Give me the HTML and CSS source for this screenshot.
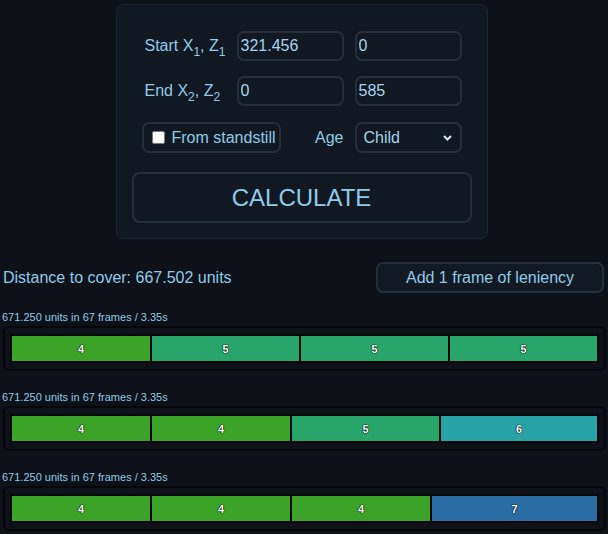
FILE: index.html
```html
<!DOCTYPE html>
<html>
<head>
<meta charset="utf-8">
<link rel="stylesheet" href="styles.css">
</head>
<body>
<div class="top">
  <div class="panel">
    <div class="row">
      <label class="lbl">Start X<sub>1</sub>, Z<sub>1</sub></label>
      <input class="field" type="text" value="321.456">
      <input class="field" type="text" value="0">
    </div>
    <div class="row">
      <label class="lbl">End X<sub>2</sub>, Z<sub>2</sub></label>
      <input class="field" type="text" value="0">
      <input class="field" type="text" value="585">
    </div>
    <div class="row row3">
      <label class="check"><input type="checkbox"><span>From standstill</span></label>
      <span class="age">Age</span>
      <select class="field select"><option>Child</option></select>
    </div>
    <button class="calc">CALCULATE</button>
  </div>
</div>

<div class="dist-row">
  <span class="dist">Distance to cover: 667.502 units</span>
  <button class="len">Add 1 frame of leniency</button>
</div>

<div class="result">
  <div class="rlabel">671.250 units in 67 frames / 3.35s</div>
  <div class="wrap"><div class="bar">
    <div class="seg c4" style="flex-grow:4">4</div>
    <div class="seg c5" style="flex-grow:5">5</div>
    <div class="seg c5" style="flex-grow:5">5</div>
    <div class="seg c5" style="flex-grow:5">5</div>
  </div></div>
</div>
<div class="result">
  <div class="rlabel">671.250 units in 67 frames / 3.35s</div>
  <div class="wrap"><div class="bar">
    <div class="seg c4" style="flex-grow:4">4</div>
    <div class="seg c4" style="flex-grow:4">4</div>
    <div class="seg c5" style="flex-grow:5">5</div>
    <div class="seg c6" style="flex-grow:6">6</div>
  </div></div>
</div>
<div class="result">
  <div class="rlabel">671.250 units in 67 frames / 3.35s</div>
  <div class="wrap"><div class="bar">
    <div class="seg c4" style="flex-grow:4">4</div>
    <div class="seg c4" style="flex-grow:4">4</div>
    <div class="seg c4" style="flex-grow:4">4</div>
    <div class="seg c7" style="flex-grow:7">7</div>
  </div></div>
</div>
</body>
</html>
```
FILE: styles.css
```css
html, body {
  margin: 0;
  background: #0e1118;
}
body {
  padding: 4px 2px 0 3px;
  font-family: "Liberation Sans", Arial, sans-serif;
  color: #8fcbea;
  font-size: 16px;
}
.top {
  padding-right: 6px;
}
.panel {
  width: 340px;
  margin: 0 auto;
  background: #121821;
  border: 1px solid #1d2430;
  border-radius: 7px;
  padding: 26px 15px 15px 15px;
  display: flex;
  flex-direction: column;
}
.row {
  display: flex;
  align-items: center;
  gap: 11px;
  padding: 0 10px;
  height: 30px;
  margin-bottom: 15px;
}
.row3 {
  height: 31px;
  margin-top: 1px;
  margin-bottom: 19px;
}
.lbl {
  flex: 1;
  padding-left: 3px;
  white-space: nowrap;
}
.lbl sub {
  font-size: 12px;
  vertical-align: -5px;
  line-height: 0;
}
.field {
  box-sizing: border-box;
  width: 107px;
  height: 30px;
  background: #121821;
  border: 2px solid #252e3b;
  border-radius: 7px;
  color: #a4d4ee;
  font-family: "Liberation Sans", Arial, sans-serif;
  font-size: 16px;
  padding: 0 0 0 2px;
  outline: none;
}
.select {
  height: 31px;
  appearance: none;
  -webkit-appearance: none;
  padding-left: 7px;
  color: #a4d4ee;
  background: #121821 url("data:image/svg+xml;utf8,<svg xmlns='http://www.w3.org/2000/svg' width='9' height='6' viewBox='0 0 9 6'><polyline points='1,1 4.5,4.5 8,1' fill='none' stroke='%23d4e9f4' stroke-width='2'/></svg>") no-repeat right 8px center;
}
.check {
  box-sizing: border-box;
  width: 139px;
  height: 31px;
  border: 2px solid #252e3b;
  border-radius: 7px;
  display: flex;
  align-items: center;
  white-space: nowrap;
}
.check input {
  width: 13px;
  height: 13px;
  margin: 0 7px 0 8px;
}
.age {
  margin-left: auto;
}
.calc {
  height: 51px;
  background: #121821;
  border: 2px solid #252e3b;
  border-radius: 8px;
  color: #8fcbea;
  font-family: "Liberation Sans", Arial, sans-serif;
  font-size: 24px;
  padding: 0;
}
.dist-row {
  display: flex;
  justify-content: space-between;
  align-items: center;
  margin-top: 23px;
}
.len {
  width: 228px;
  height: 31px;
  margin-right: 2px;
  background: #121922;
  border: 2px solid #252e3b;
  border-radius: 7px;
  color: #8fcbea;
  font-family: "Liberation Sans", Arial, sans-serif;
  font-size: 16px;
  padding: 0;
}
.result {
  margin-bottom: 20px;
}
.dist-row + .result {
  margin-top: 18px;
}
.rlabel {
  font-size: 11px;
  line-height: 13px;
  margin-left: -1px;
  margin-bottom: 2px;
}
.wrap {
  border: 2px solid #06070a;
  border-radius: 6px;
  padding: 6px 5px;
  background: #0e1118;
}
.bar {
  display: flex;
  gap: 2px;
  padding: 2px;
  background: #050607;
}
.seg {
  flex-shrink: 1;
  flex-basis: 102px;
  height: 25px;
  display: flex;
  align-items: center;
  justify-content: center;
  color: #fff;
  font-size: 11px;
  font-weight: bold;
  text-shadow: 0 0 1px #000, 0 0 1px #000, 0 0 1px #000;
}
.c4 { background: #3ba327; }
.c5 { background: #28a66a; }
.c6 { background: #28a4a8; }
.c7 { background: #2a6ca4; }
```
